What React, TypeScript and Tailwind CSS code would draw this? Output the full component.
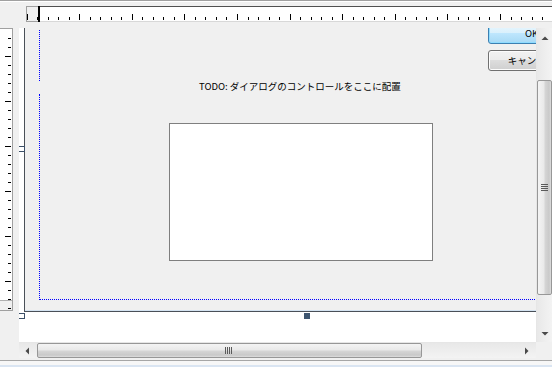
import React from "react"

const topTicks: { x: number; long: boolean }[] = []
for (let n = -5; n <= 46; n++) {
  const x = Math.round(79.2 + 10.52 * n)
  if (x < 26 || x > 551) continue
  topTicks.push({ x, long: n % 5 === 0 })
}

const leftTicks: { y: number; long: boolean }[] = []
for (let n = 0; n <= 31; n++) {
  const y = 38 + 9 * n
  if (y > 309) continue
  leftTicks.push({ y: y - 28, long: (y - 56) % 45 === 0 })
}

const jp = "font-['Noto_Sans_CJK_JP','Liberation_Sans',sans-serif]"

function TopRuler() {
  return (
    <div className="relative flex h-[16px]">
      <div className="w-[26px]" />
      <div className="w-[12px] border border-r-0 border-[#a0a0a0] bg-[#f0f0f0]" />
      <div className="flex-1 border-t border-b border-t-[#505050] border-b-[#d8d8d8] bg-white" />
      <svg className="pointer-events-none absolute left-0 top-0" width="552" height="16">
        {topTicks.map((t) => (
          <rect key={t.x} x={t.x} y={t.long ? 8 : 11} width="1" height={t.long ? 6 : 3} fill="#000" />
        ))}
        <rect x="38" y="0" width="2" height="16" fill="#000" />
      </svg>
    </div>
  )
}

function LeftRuler() {
  return (
    <div className="flex w-[13px] flex-col">
      <div className="relative h-[283px] border-t border-r border-b border-[#a0a0a0] bg-white">
        <div className="absolute left-0 right-0 top-[271px] bottom-0 border-t border-[#b0b0b0] bg-[#f0f0f0]" />
        <svg className="absolute left-0 top-[-1px]" width="13" height="283">
          {leftTicks.map((t) => (
            <rect key={t.y} x={t.long ? 5 : 8} y={t.y} width={t.long ? 6 : 3} height="1" fill="#000" />
          ))}
        </svg>
      </div>
    </div>
  )
}

function VScrollbar() {
  return (
    <div className="relative w-[16px] border-l border-[#e6e6e6] bg-[linear-gradient(to_right,#e8e8e8,#f3f3f3)]">
      <svg className="absolute left-0 top-0" width="16" height="314">
        <polygon points="4.5,12 11.5,12 8,8.5" fill="#4a4a4a" />
        <polygon points="4.5,304 11.5,304 8,307.5" fill="#4a4a4a" />
      </svg>
      <div className="absolute left-0 top-[52px] h-[215px] w-[15px] rounded-[2px] border border-[#979797] bg-[linear-gradient(to_right,#f4f4f4,#e9e9e9_45%,#d5d5d5_55%,#c9c9c9_85%,#dcdcdc)]">
        <div className="absolute left-[3px] top-[103px] flex w-[7px] flex-col gap-[1px]">
          <div className="h-px bg-[#5a5a5a]" />
          <div className="h-px bg-[#5a5a5a]" />
          <div className="h-px bg-[#5a5a5a]" />
          <div className="h-px bg-[#5a5a5a]" />
        </div>
      </div>
    </div>
  )
}

function HScrollbar() {
  return (
    <div className="flex h-[16px]">
      <div className="w-[19px]" />
      <div className="relative w-[517px] border-t border-[#e6e6e6] bg-[linear-gradient(#e8e8e8,#f3f3f3)]">
        <svg className="absolute left-0 top-0" width="517" height="16">
          <polygon points="10,4.5 10,11.5 6.5,8" fill="#4a4a4a" />
          <polygon points="506,4.5 506,11.5 509.5,8" fill="#4a4a4a" />
        </svg>
        <div className="absolute left-[18px] top-0 h-[15px] w-[385px] rounded-[2px] border border-[#979797] bg-[linear-gradient(#f4f4f4,#e9e9e9_45%,#d5d5d5_55%,#c9c9c9_85%,#dcdcdc)]">
          <div className="absolute left-[187px] top-[3px] flex h-[7px] gap-[1px]">
            <div className="w-px bg-[#5a5a5a]" />
            <div className="w-px bg-[#5a5a5a]" />
            <div className="w-px bg-[#5a5a5a]" />
            <div className="w-px bg-[#5a5a5a]" />
          </div>
        </div>
      </div>
      <div className="w-[16px]" />
    </div>
  )
}

function DialogSurface() {
  return (
    <div className="relative ml-[5px] h-[284px] w-[566px] border-l border-b border-[#4a5058] bg-[#f0f0f0]">
      <div className="absolute bottom-0 left-0 right-0 h-px bg-[#d4e3f1]" />

      {/* margin guides */}
      <div className="absolute left-[14px] top-[2px] h-[51px] border-l border-dotted border-[#0000ff]" />
      <div className="absolute left-[14px] top-[66px] h-[206px] border-l border-dotted border-[#0000ff]" />
      <div className="absolute left-[14px] top-[271px] w-[536px] border-t border-dotted border-[#0000ff]" />

      <div className={`absolute left-[174px] top-[52px] whitespace-nowrap text-[9.5px] leading-[12px] text-black ${jp}`}>
        TODO: ダイアログのコントロールをここに配置
      </div>

      <div className="absolute left-[144px] top-[95px] h-[138px] w-[264px] border border-[#7f7f7f] bg-white" />

      <div
        className={`absolute left-[463px] top-[-5px] flex h-[21px] w-[87px] items-center justify-center rounded-[3px] border border-[#3c7fb1] bg-[linear-gradient(#eaf6fd,#d9f0fc_50%,#bee6fd_50%,#a7d9f5)] text-[9.5px] text-black shadow-[inset_0_0_0_1px_#8fdcff] ${jp}`}
      >
        OK
      </div>
      <div
        className={`absolute left-[463px] top-[22px] flex h-[21px] w-[87px] items-center justify-center rounded-[3px] border border-[#707070] bg-[linear-gradient(#f2f2f2,#ebebeb_50%,#dddddd_50%,#cfcfcf)] text-[9.5px] text-black shadow-[inset_0_0_0_1px_#fcfcfc] ${jp}`}
      >
        キャンセル
      </div>
    </div>
  )
}

export default function App() {
  return (
    <div className="flex h-[367px] w-[552px] flex-col overflow-hidden bg-[#f0f0f0]">
      <div className="h-px bg-[#a0a0a0]" />
      <div className="h-px bg-white" />
      <div className="h-[4px]" />
      <TopRuler />
      <div className="h-[6px]" />

      <div className="flex h-[314px]">
        <LeftRuler />
        <div className="w-[6px]" />
        <div className="relative w-[517px] overflow-hidden bg-white">
          <DialogSurface />
          {/* selection handles */}
          <div className="absolute left-0 top-[118px] h-[6px] w-[6px] border-t border-b border-r border-[#3c5068]" />
          <div className="absolute left-0 top-[285px] h-[6px] w-[6px] border-t border-b border-r border-[#3c5068]" />
          <div className="absolute left-[285px] top-[285px] h-[6px] w-[6px] bg-[#3d5570]" />
        </div>
        <VScrollbar />
      </div>

      <HScrollbar />

      <div className="h-[2px]" />
      <div className="h-px bg-[#a6a6a6]" />
      <div className="h-[4px] bg-[#f7f7f7]" />
      <div className="h-[2px] bg-[#dae5f2]" />
    </div>
  )
}
